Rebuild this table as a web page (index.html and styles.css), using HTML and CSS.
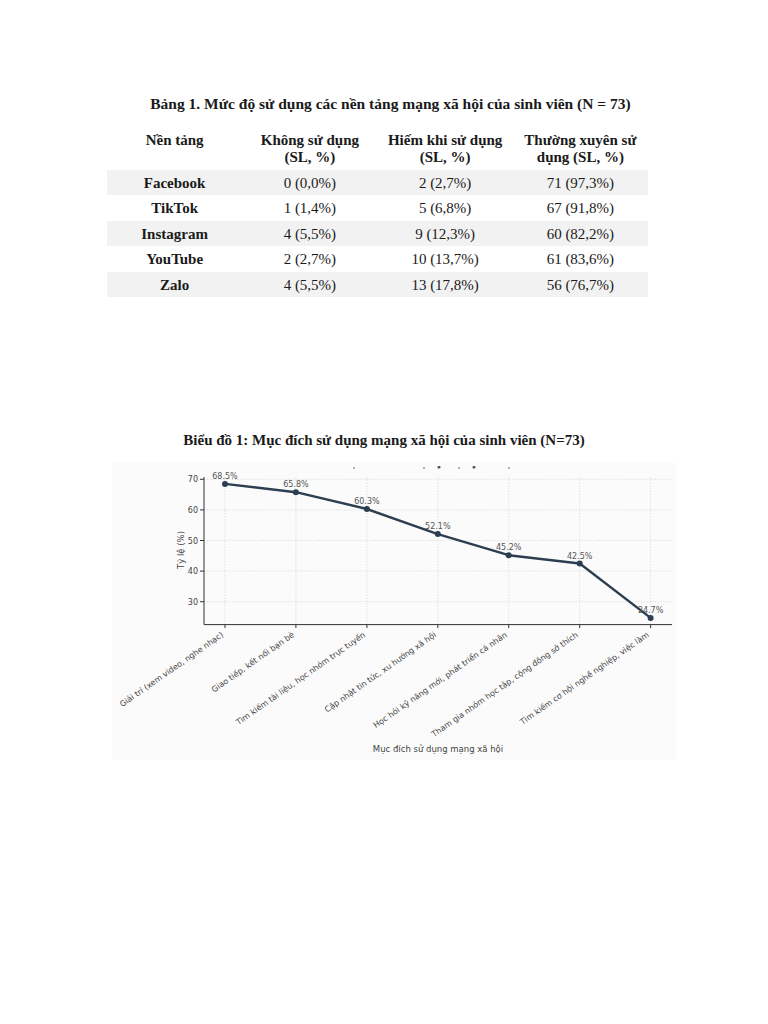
FILE: index.html
```html
<!DOCTYPE html>
<html lang="vi">
<head>
<meta charset="utf-8">
<title>Bảng 1 và Biểu đồ 1</title>
<link rel="stylesheet" href="styles.css">
</head>
<body>
<div class="page">
  <p class="caption table-caption">Bảng 1. Mức độ sử dụng các nền tảng mạng xã hội của sinh viên (N = 73)</p>
  <table class="usage">
    <thead>
      <tr>
        <th>Nền tảng</th>
        <th>Không sử dụng<br>(SL, %)</th>
        <th>Hiếm khi sử dụng<br>(SL, %)</th>
        <th>Thường xuyên sử<br>dụng (SL, %)</th>
      </tr>
    </thead>
    <tbody>
      <tr class="shade"><th>Facebook</th><td>0 (0,0%)</td><td>2 (2,7%)</td><td>71 (97,3%)</td></tr>
      <tr><th>TikTok</th><td>1 (1,4%)</td><td>5 (6,8%)</td><td>67 (91,8%)</td></tr>
      <tr class="shade"><th>Instagram</th><td>4 (5,5%)</td><td>9 (12,3%)</td><td>60 (82,2%)</td></tr>
      <tr><th>YouTube</th><td>2 (2,7%)</td><td>10 (13,7%)</td><td>61 (83,6%)</td></tr>
      <tr class="shade"><th>Zalo</th><td>4 (5,5%)</td><td>13 (17,8%)</td><td>56 (76,7%)</td></tr>
    </tbody>
  </table>

  <p class="caption chart-caption">Biểu đồ 1: Mục đích sử dụng mạng xã hội của sinh viên (N=73)</p>
  <div class="chart">
    <svg class="chart-svg" width="564" height="297" viewBox="112 463 564 297" xmlns="http://www.w3.org/2000/svg">
      <rect x="112" y="463" width="564" height="297" fill="#fbfbfb"/>
      <g class="specks">
        <circle cx="354" cy="468" r="0.8"/>
        <circle cx="424" cy="468" r="0.8"/>
        <rect x="437.5" y="466" width="3" height="2.5" rx="1"/>
        <circle cx="459" cy="468" r="0.8"/>
        <rect x="472.5" y="466" width="3" height="2.5" rx="1"/>
        <circle cx="509" cy="468" r="0.8"/>
      </g>
      <g class="grid">
        <line x1="204" y1="479.3" x2="672" y2="479.3"/>
        <line x1="204" y1="509.9" x2="672" y2="509.9"/>
        <line x1="204" y1="540.5" x2="672" y2="540.5"/>
        <line x1="204" y1="571.1" x2="672" y2="571.1"/>
        <line x1="204" y1="601.7" x2="672" y2="601.7"/>
        <line x1="225" y1="477" x2="225" y2="624.6"/>
        <line x1="295.9" y1="477" x2="295.9" y2="624.6"/>
        <line x1="366.9" y1="477" x2="366.9" y2="624.6"/>
        <line x1="437.8" y1="477" x2="437.8" y2="624.6"/>
        <line x1="508.7" y1="477" x2="508.7" y2="624.6"/>
        <line x1="579.7" y1="477" x2="579.7" y2="624.6"/>
        <line x1="650.6" y1="477" x2="650.6" y2="624.6"/>
      </g>
      <g class="axis">
        <line x1="204" y1="477" x2="204" y2="624.6"/>
        <line x1="204" y1="624.6" x2="672" y2="624.6"/>
        <line x1="200" y1="479.3" x2="204" y2="479.3"/>
        <line x1="200" y1="509.9" x2="204" y2="509.9"/>
        <line x1="200" y1="540.5" x2="204" y2="540.5"/>
        <line x1="200" y1="571.1" x2="204" y2="571.1"/>
        <line x1="200" y1="601.7" x2="204" y2="601.7"/>
        <line x1="225" y1="624.6" x2="225" y2="628"/>
        <line x1="295.9" y1="624.6" x2="295.9" y2="628"/>
        <line x1="366.9" y1="624.6" x2="366.9" y2="628"/>
        <line x1="437.8" y1="624.6" x2="437.8" y2="628"/>
        <line x1="508.7" y1="624.6" x2="508.7" y2="628"/>
        <line x1="579.7" y1="624.6" x2="579.7" y2="628"/>
        <line x1="650.6" y1="624.6" x2="650.6" y2="628"/>
      </g>
      <g class="ytick">
        <text x="198" y="482.3">70</text>
        <text x="198" y="512.9">60</text>
        <text x="198" y="543.5">50</text>
        <text x="198" y="574.1">40</text>
        <text x="198" y="604.7">30</text>
      </g>
      <text class="ylabel" x="184" y="550" transform="rotate(-90 184 550)">Tỷ lệ (%)</text>
      <polyline class="series" points="225,483.9 295.9,492.2 366.9,509 437.8,534.1 508.7,555.2 579.7,563.5 650.6,617.9"/>
      <g class="marker">
        <circle cx="225" cy="483.9" r="3"/>
        <circle cx="295.9" cy="492.2" r="3"/>
        <circle cx="366.9" cy="509" r="3"/>
        <circle cx="437.8" cy="534.1" r="3"/>
        <circle cx="508.7" cy="555.2" r="3"/>
        <circle cx="579.7" cy="563.5" r="3"/>
        <circle cx="650.6" cy="617.9" r="3"/>
      </g>
      <g class="value">
        <text x="225" y="478.9">68.5%</text>
        <text x="295.9" y="487.2">65.8%</text>
        <text x="366.9" y="504">60.3%</text>
        <text x="437.8" y="529.1">52.1%</text>
        <text x="508.7" y="550.2">45.2%</text>
        <text x="579.7" y="558.5">42.5%</text>
        <text x="650.6" y="612.9">24.7%</text>
      </g>
      <g class="xtick">
        <text x="224" y="636" transform="rotate(-35 224 636)">Giải trí (xem video, nghe nhạc)</text>
        <text x="294.9" y="636" transform="rotate(-35 294.9 636)">Giao tiếp, kết nối bạn bè</text>
        <text x="365.9" y="636" transform="rotate(-35 365.9 636)">Tìm kiếm tài liệu, học nhóm trực tuyến</text>
        <text x="436.8" y="636" transform="rotate(-35 436.8 636)">Cập nhật tin tức, xu hướng xã hội</text>
        <text x="507.7" y="636" transform="rotate(-35 507.7 636)">Học hỏi kỹ năng mới, phát triển cá nhân</text>
        <text x="578.7" y="636" transform="rotate(-35 578.7 636)">Tham gia nhóm học tập, cộng đồng sở thích</text>
        <text x="649.6" y="636" transform="rotate(-35 649.6 636)">Tìm kiếm cơ hội nghề nghiệp, việc làm</text>
      </g>
      <text class="xlabel" x="438" y="752">Mục đích sử dụng mạng xã hội</text>
    </svg>
  </div>
</div>
</body>
</html>
```

FILE: styles.css
```css
html, body {
  margin: 0;
  padding: 0;
  background: #ffffff;
}

body {
  font-family: "Liberation Serif", "Times New Roman", serif;
  color: #1a1a1a;
}

.page {
  width: 768px;
  padding-top: 95px;
}

.caption {
  margin: 0;
  font-size: 15px;
  line-height: 17px;
  font-weight: bold;
  text-align: center;
}

.table-caption {
  font-size: 15.5px;
  padding-left: 13px;
}

.usage {
  margin: 17px 0 0 107px;
  width: 541px;
  border-collapse: collapse;
  table-layout: fixed;
  font-size: 15px;
  line-height: 17px;
}

.usage th,
.usage td {
  text-align: center;
  padding: 5px 0 3.5px;
  width: 25%;
}

.usage thead th {
  padding: 3px 0 3.5px;
  vertical-align: top;
}

.usage tbody th {
  font-weight: bold;
}

.usage td {
  font-weight: normal;
}

.usage .shade {
  background: #f2f2f2;
}

.chart-caption {
  margin-top: 135px;
}

.chart {
  margin: 14px 0 0 112px;
  width: 564px;
  height: 297px;
}

.chart-svg {
  display: block;
  overflow: hidden;
  font-family: "DejaVu Sans", sans-serif;
}

.specks circle,
.specks rect {
  fill: #555;
}

.grid line {
  stroke: #d4d4d4;
  stroke-width: 0.8;
  stroke-dasharray: 1.2 1.6;
}

.axis line {
  stroke: #333;
  stroke-width: 1;
}

.ytick text {
  font-size: 8px;
  fill: #444;
  text-anchor: end;
}

.ylabel {
  font-size: 8.5px;
  fill: #444;
  text-anchor: middle;
}

.series {
  fill: none;
  stroke: #2c3e50;
  stroke-width: 2.4;
  stroke-linejoin: round;
}

.marker circle {
  fill: #2c3e50;
}

.value text {
  font-size: 8px;
  fill: #555;
  text-anchor: middle;
}

.xtick text {
  font-size: 8px;
  fill: #444;
  text-anchor: end;
}

.xlabel {
  font-size: 8.5px;
  fill: #444;
  text-anchor: middle;
}
```
